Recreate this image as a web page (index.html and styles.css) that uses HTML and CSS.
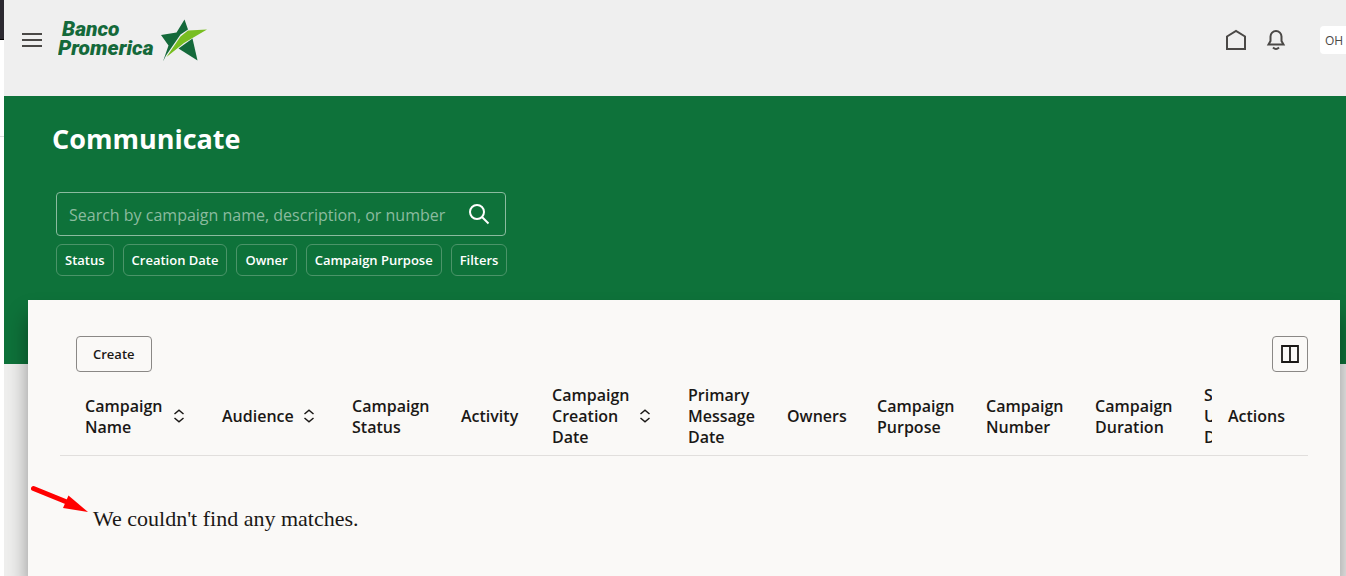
FILE: index.html
```html
<!DOCTYPE html>
<html lang="en">
<head>
<meta charset="utf-8">
<title>Communicate</title>
<meta name="viewport" content="width=device-width, initial-scale=1">
<link rel="stylesheet" href="styles.css">
</head>
<body>
<div class="shell">
  <div class="rail"><div class="rail-top"></div><div class="rail-mid"></div></div>
  <div class="app">
    <header class="topbar">
      <button class="icon-btn menu" type="button" aria-label="Menu">
        <svg width="20" height="14" viewBox="0 0 20 14" fill="#4a4846"><path d="M0 0h20v2H0zM0 6h20v2H0zM0 12h20v2H0z"/></svg>
      </button>
      <a class="logo" href="#" aria-label="Banco Promerica">
        <svg width="150" height="44" viewBox="0 0 150 44">
          <text class="logo-text" x="4" y="18">Banco</text>
          <text class="logo-text" x="0" y="37">Promerica</text>
          <path fill="#14693a" d="M126.500 1.500 130 11.500 122.500 16.500 108 37.500 105 43.500 110.500 27.500 103 17 118.500 14.500z"/>
          <path fill="#14693a" d="M120.500 30.500 134.500 20.500 139.500 42.500z"/>
          <path fill="#78be20" d="M130 12.500 149 11.500 126 25 108.500 39 122.500 18.500z"/>
        </svg>
      </a>
      <div class="top-actions">
        <button class="icon-btn" type="button" aria-label="Home">
          <svg width="22" height="22" viewBox="0 0 22 22" fill="none" stroke="#4a4846" stroke-width="2"><path d="M2 7.500 11 2l9 5.500V20H2z"/></svg>
        </button>
        <button class="icon-btn" type="button" aria-label="Notifications">
          <svg width="20" height="22" viewBox="0 0 20 22" fill="none" stroke="#4a4846" stroke-width="2"><path d="M2.500 15.500 4.500 12V7.500a5.500 5.500 0 0 1 11 0V12l2 3.500zM7 18.500Q10 21.500 13 18.500"/></svg>
        </button>
        <button class="avatar" type="button">OH</button>
      </div>
    </header>
    <main class="content">
      <section class="banner">
        <h1 class="title">Communicate</h1>
        <form class="search" role="search">
          <input class="search-input" type="text" aria-label="Search campaigns" placeholder="Search by campaign name, description, or number">
          <button class="icon-btn" type="button" aria-label="Search">
            <svg width="22" height="22" viewBox="0 0 22 22" fill="none" stroke="#fff" stroke-width="2"><circle cx="9" cy="9" r="7"/><path d="M14 14l6.500 6.500"/></svg>
          </button>
        </form>
        <div class="chips">
          <button class="chip" type="button">Status</button>
          <button class="chip" type="button">Creation Date</button>
          <button class="chip" type="button">Owner</button>
          <button class="chip" type="button">Campaign Purpose</button>
          <button class="chip" type="button">Filters</button>
        </div>
      </section>
      <section class="card">
        <div class="toolbar">
          <button class="outlined create" type="button">Create</button>
          <button class="outlined columns" type="button" aria-label="Manage columns">
            <svg width="18" height="18" viewBox="0 0 18 18" fill="none" stroke="#1a1816" stroke-width="1.800"><path d="M1 1h16v16H1zM9 1v16"/></svg>
          </button>
        </div>
        <div class="table-wrap">
          <table class="grid">
            <colgroup><col class="w-name"><col class="w-audience"><col class="w-campaign"><col class="w-activity"><col class="w-created"><col class="w-message"><col class="w-owners"><col class="w-campaign"><col class="w-campaign"><col class="w-campaign"><col class="w-campaign"><col class="w-actions"></colgroup>
            <thead><tr>
              <th scope="col" class="first"><button class="sort" type="button">Campaign<br>Name<svg width="12" height="14" viewBox="0 0 12 14" fill="none" stroke="#1a1816" stroke-width="1.500"><path d="M1.500 5 6 1.200 10.500 5M1.500 9 6 12.800 10.500 9"/></svg></button></th>
              <th scope="col"><button class="sort" type="button">Audience<svg width="12" height="14" viewBox="0 0 12 14" fill="none" stroke="#1a1816" stroke-width="1.500"><path d="M1.500 5 6 1.200 10.500 5M1.500 9 6 12.800 10.500 9"/></svg></button></th>
              <th scope="col">Campaign<br>Status</th>
              <th scope="col">Activity</th>
              <th scope="col"><button class="sort" type="button">Campaign<br>Creation<br>Date<svg width="12" height="14" viewBox="0 0 12 14" fill="none" stroke="#1a1816" stroke-width="1.500"><path d="M1.500 5 6 1.200 10.500 5M1.500 9 6 12.800 10.500 9"/></svg></button></th>
              <th scope="col">Primary<br>Message<br>Date</th>
              <th scope="col">Owners</th>
              <th scope="col">Campaign<br>Purpose</th>
              <th scope="col">Campaign<br>Number</th>
              <th scope="col">Campaign<br>Duration</th>
              <th scope="col">Status<br>Update<br>Date</th>
              <th scope="col" class="pinned">Actions</th>
            </tr></thead>
          </table>
        </div>
        <div class="empty">
          <p class="empty-text">We couldn't find any matches.</p>
          <svg class="arrow" width="60" height="32" viewBox="0 0 60 32"><path d="M5.500 4.500 40 18.500" stroke="#f00" stroke-width="5" stroke-linecap="round"/><path fill="#f00" d="M40.500 11.500 60 28 35 24z"/></svg>
        </div>
      </section>
    </main>
  </div>
</div>
</body>
</html>
```
FILE: styles.css
```css
* { box-sizing: border-box; }
body {
  margin: 0;
  font-family: "Open Sans", "Noto Sans", sans-serif;
  font-size: 16px;
  color: #1a1816;
  background: #efefee;
}
button { font-family: inherit; color: inherit; cursor: pointer; }

.shell { display: grid; grid-template-columns: 4px minmax(0, 1fr); height: 100vh; overflow: hidden; }
.rail { background: #fff; }
.rail-top { height: 40px; background: #2b2930; border-bottom: 1px solid #000; }
.rail-mid { height: 97px; border-bottom: 1px solid #dedede; }
.app { display: flex; flex-direction: column; min-height: 0; overflow: hidden; }

.topbar { display: flex; flex: none; align-items: flex-start; height: 96px; padding: 18px 0 0 18px; background: #efefef; }
.icon-btn { display: flex; align-items: center; justify-content: center; padding: 0; border: 0; background: none; }
.menu { height: 44px; }
.logo { display: flex; margin-left: 16px; }
.logo-text { font-family: Roboto, "Liberation Sans", sans-serif; font-size: 21px; font-weight: 900; font-style: italic; fill: #14693a; }
.top-actions { display: flex; align-items: center; gap: 19px; height: 44px; margin-left: auto; margin-right: -4px; }
.avatar { width: 30px; height: 28px; margin-left: 15px; padding: 0 4px 0 5px; border: 0; border-radius: 4px; background: #fff; color: #4a4846; font-size: 12px; text-align: left; }

.content { display: flex; flex: 1; flex-direction: column; }
.banner { height: 268px; flex: none; padding: 24px 48px 0; background: #0e723a; color: #fff; }
.title { margin: 0; font-size: 27px; line-height: 38px; font-weight: 700; }
.search { display: flex; width: 450px; height: 44px; margin: 34px 0 8px 4px; padding: 0 15px 0 12px; border: 1px solid #8bbb9f; border-radius: 4px; }
.search-input { flex: 1; min-width: 0; padding: 2px 0 0; border: 0; outline: 0; background: none; color: #fff; font: inherit; }
.search-input::placeholder { color: #8bbb9f; opacity: 1; }
.chips { display: flex; gap: 9px; margin-left: 4px; }
.chip { height: 32px; padding: 0 8px; border: 1px solid #4b9469; border-radius: 6px; background: none; color: #fff; font-size: 13px; font-weight: 600; white-space: nowrap; }

.card { flex: 1; margin: -64px 6px 0 24px; padding: 36px 32px; background: #faf9f7; box-shadow: 0 16px 20px rgba(0, 0, 0, .4); }
.toolbar { display: flex; justify-content: space-between; padding-left: 16px; }
.outlined { display: flex; align-items: center; justify-content: center; height: 36px; border: 1px solid #8a8886; border-radius: 4px; background: none; }
.create { padding: 0 16px; font-size: 13px; font-weight: 600; }
.columns { width: 36px; padding: 0; }

.table-wrap { margin-top: 4px; overflow-x: auto; scrollbar-width: none; }
.grid { width: 1333px; table-layout: fixed; border-collapse: separate; border-spacing: 0; }
.grid th { height: 80px; padding: 2px 0 0 16px; border-bottom: 1px solid #e1dfdd; text-align: left; vertical-align: middle; font-size: 16px; line-height: 21px; font-weight: 600; white-space: nowrap; }
.grid .first { padding-left: 25px; }
.grid .pinned { position: sticky; right: 0; background: #faf9f7; }
.sort { position: relative; display: block; width: 100%; padding: 0; border: 0; background: none; font: inherit; text-align: left; }
.sort svg { position: absolute; top: 50%; right: 21px; margin-top: -8px; }
.w-name { width: 146px; }
.w-audience { width: 130px; }
.w-campaign { width: 109px; }
.w-activity { width: 91px; }
.w-created { width: 136px; }
.w-message { width: 99px; }
.w-owners { width: 90px; }
.w-actions { width: 96px; }

.empty { position: relative; padding: 48px 0 0 33px; }
.empty-text { margin: 0; font-family: Georgia, "Liberation Serif", serif; font-size: 22px; line-height: 30px; }
.arrow { position: absolute; top: 28px; left: -32px; }
```
